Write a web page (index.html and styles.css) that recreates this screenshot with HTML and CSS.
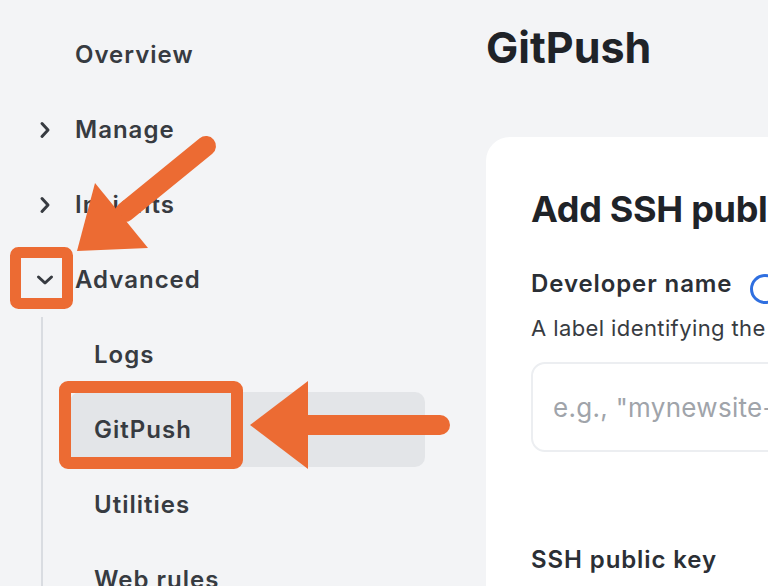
FILE: index.html
```html
<!DOCTYPE html>
<html lang="en">
<head>
<meta charset="utf-8">
<title>GitPush</title>
<link rel="stylesheet" href="styles.css">
</head>
<body>
<div class="page">
  <nav class="sidebar">
    <div class="nav-item"><span class="chev"></span><span>Overview</span></div>
    <div class="nav-item"><span class="chev"><svg viewBox="0 0 24 24" width="24" height="24"><path d="M9 5.5 L15 12 L9 18.5"/></svg></span><span>Manage</span></div>
    <div class="nav-item"><span class="chev"><svg viewBox="0 0 24 24" width="24" height="24"><path d="M9 5.5 L15 12 L9 18.5"/></svg></span><span>Insights</span></div>
    <div class="nav-item"><span class="chev"><svg viewBox="0 0 24 24" width="24" height="24"><path d="M5.5 9 L12 15 L18.5 9"/></svg></span><span>Advanced</span></div>
    <div class="sub">
      <div class="sub-item">Logs</div>
      <div class="sub-item active">GitPush</div>
      <div class="sub-item">Utilities</div>
      <div class="sub-item">Web rules</div>
    </div>
  </nav>
  <main class="main">
    <h1 class="title">GitPush</h1>
    <section class="card">
      <h2 class="card-title">Add SSH public key</h2>
      <div class="field-label"><span>Developer name</span><span class="info"></span></div>
      <p class="help">A label identifying the developer</p>
      <div class="input">e.g., "mynewsite-developer"</div>
      <div class="field-label second"><span>SSH public key</span></div>
    </section>
  </main>
  <svg class="annot" viewBox="0 0 768 586" width="768" height="586">
    <rect x="15.5" y="252.5" width="52" height="51" rx="3" fill="none" stroke="#ec6b33" stroke-width="11"/>
    <line x1="125" y1="212" x2="206" y2="146" stroke="#ec6b33" stroke-width="20" stroke-linecap="round"/>
    <polygon points="77,251 95,183 148,248" fill="#ec6b33"/>
    <rect x="65" y="387" width="172" height="76" rx="3" fill="none" stroke="#ec6b33" stroke-width="12"/>
    <line x1="300" y1="425" x2="440" y2="425" stroke="#ec6b33" stroke-width="20" stroke-linecap="round"/>
    <polygon points="250,425 308,381 308,469" fill="#ec6b33"/>
  </svg>
</div>
</body>
</html>
```
FILE: styles.css
```css
html, body {
  margin: 0;
  height: 100%;
  overflow: hidden;
  background: #f3f4f6;
  font-family: Inter, "Noto Sans", sans-serif;
}

.page {
  position: relative;
  display: flex;
  width: 768px;
  height: 586px;
  overflow: hidden;
}

.sidebar {
  flex: none;
  width: 486px;
  box-sizing: border-box;
  padding: 17px 0 0 33px;
  color: #373b41;
  font-size: 24px;
  font-weight: 600;
  letter-spacing: 1px;
}

.nav-item {
  display: flex;
  align-items: center;
  gap: 18px;
  height: 75px;
}

.chev {
  flex: none;
  display: flex;
  width: 24px;
  height: 24px;
}

.chev svg path {
  fill: none;
  stroke: #373b41;
  stroke-width: 3;
  stroke-linecap: round;
  stroke-linejoin: round;
}

.sub {
  margin-left: 8px;
  border-left: 2px solid #d9dce1;
  padding-left: 27px;
}

.sub-item {
  display: flex;
  align-items: center;
  box-sizing: border-box;
  width: 355px;
  height: 75px;
  padding-left: 24px;
  border-radius: 10px;
}

.sub-item.active {
  background: #e3e5e8;
}

.main {
  flex: none;
  padding-top: 21px;
}

.title {
  margin: 0 0 64px;
  font-size: 43px;
  line-height: 52px;
  font-weight: 700;
  color: #1f2328;
}

.card {
  box-sizing: border-box;
  width: 720px;
  height: 600px;
  padding: 50px 0 0 45px;
  background: #ffffff;
  border-radius: 24px;
}

.card-title {
  margin: 0 0 38px;
  font-size: 36px;
  line-height: 44px;
  font-weight: 700;
  letter-spacing: -0.3px;
  color: #1f2328;
  white-space: nowrap;
}

.field-label {
  display: flex;
  align-items: flex-start;
  gap: 18px;
  font-size: 24px;
  line-height: 30px;
  font-weight: 600;
  letter-spacing: 0.9px;
  color: #2b2f35;
  white-space: nowrap;
}

.field-label.second {
  margin-top: 93px;
}

.info {
  flex: none;
  box-sizing: border-box;
  width: 30px;
  height: 30px;
  margin-top: 5px;
  border: 3px solid #2f6fe0;
  border-radius: 50%;
}

.help {
  margin: 10px 0 0;
  font-size: 22px;
  line-height: 28px;
  letter-spacing: 0.4px;
  color: #373b41;
  white-space: nowrap;
}

.input {
  display: flex;
  align-items: center;
  box-sizing: border-box;
  width: 600px;
  height: 90px;
  margin-top: 20px;
  padding-left: 20px;
  border: 2px solid #eceef1;
  border-radius: 14px;
  font-size: 26px;
  letter-spacing: 0.3px;
  color: #a0a4aa;
  white-space: nowrap;
}

.annot {
  position: absolute;
  left: 0;
  top: 0;
  pointer-events: none;
}
```
